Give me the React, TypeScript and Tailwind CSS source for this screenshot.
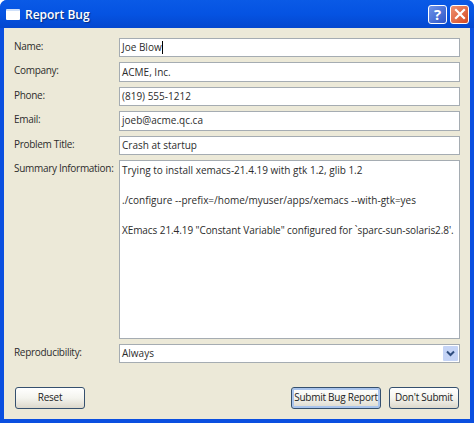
import React from "react";

const fields = [
  { label: "Name:", value: "Joe Blow", caret: true },
  { label: "Company:", value: "ACME, Inc." },
  { label: "Phone:", value: "(819) 555-1212" },
  { label: "Email:", value: "joeb@acme.qc.ca" },
  { label: "Problem Title:", value: "Crash at startup" },
];

function Row({ label, children }: { label: string; children: React.ReactNode }) {
  return (
    <div className="flex">
      <div className="w-[105px] shrink-0 pt-[1px] whitespace-nowrap tracking-[-0.3px] text-[#2c2c2c]">{label}</div>
      <div className="flex-1 min-w-0">{children}</div>
    </div>
  );
}

function Button({ label, focused, width }: { label: string; focused?: boolean; width: string }) {
  return (
    <button
      className={`${width} h-[22px] whitespace-nowrap tracking-[-0.25px] rounded-[3px] border border-[#35506e] bg-gradient-to-b from-white via-[#f4f4ee] to-[#dcd8cc] text-[#222] ${
        focused ? "shadow-[inset_0_0_0_2px_#a9c4ec]" : ""
      }`}
    >
      {label}
    </button>
  );
}

export default function App() {
  return (
    <div className="w-[474px] h-[423px] flex flex-col overflow-hidden rounded-t-[7px] bg-[#0a4fe0] font-['Open_Sans',sans-serif] text-[10px] leading-[15px]">
      {/* title bar */}
      <div className="h-[28px] shrink-0 flex items-center pl-[6px] pr-[5px] bg-gradient-to-b from-[#0a5ae6] via-[#0553e2] to-[#0447cf]">
        <div className="w-[14px] h-[11px] bg-white rounded-[1px] border-t-2 border-[#cfe0fa]" />
        <div className="ml-[5px] text-[12px] font-semibold text-white [text-shadow:1px_1px_1px_#0a2f80]">
          Report Bug
        </div>
        <div className="ml-auto flex gap-[3px] items-center">
          <div className="w-[19px] h-[19px] rounded-[3px] border border-white bg-gradient-to-br from-[#6f93e8] to-[#2f55c8] flex items-center justify-center text-white font-bold text-[15px]">
            ?
          </div>
          <div className="w-[19px] h-[19px] rounded-[3px] border border-white bg-gradient-to-br from-[#ee9170] to-[#d4481f] flex items-center justify-center">
            <svg width="12" height="12" viewBox="0 0 12 12">
              <path d="M2 2 L10 10 M10 2 L2 10" stroke="white" strokeWidth="2.2" strokeLinecap="square" />
            </svg>
          </div>
        </div>
      </div>

      {/* client area */}
      <div className="flex-1 mx-[4px] mb-[4px] bg-[#ece9d8] flex flex-col pl-[10px] pr-[10px] pt-[10px]">
        <div className="flex flex-col gap-[5px]">
          {fields.map((f) => (
            <Row key={f.label} label={f.label}>
              <div className="h-[19.4px] bg-white border border-[#a5acb2] pl-[2px] flex items-center text-[#2c2c2c]">
                {f.value}
                {f.caret && <span className="w-px h-[13px] bg-black" />}
              </div>
            </Row>
          ))}
          <Row label="Summary Information:">
            <div className="h-[179px] bg-white border border-[#a5acb2] pl-[2px] pt-[2px] text-[#2c2c2c] whitespace-pre">
              <div>Trying to install xemacs-21.4.19 with gtk 1.2, glib 1.2</div>
              <div className="mt-[15px]">./configure --prefix=/home/myuser/apps/xemacs --with-gtk=yes</div>
              <div className="mt-[15px] tracking-[-0.08px]">XEmacs 21.4.19 "Constant Variable" configured for `sparc-sun-solaris2.8'.</div>
            </div>
          </Row>
          <Row label="Reproducibility:">
            <div className="h-[19px] bg-white border border-[#a5acb2] pl-[2px] flex items-center justify-between text-[#2c2c2c]">
              Always
              <div className="w-[15px] h-[15px] mr-[1px] rounded-[1px] bg-[#c5d4f6] flex items-center justify-center">
                <svg width="9" height="7" viewBox="0 0 9 7">
                  <path d="M1 1.5 L4.5 5 L8 1.5" fill="none" stroke="#2f4d7e" strokeWidth="2" />
                </svg>
              </div>
            </div>
          </Row>
        </div>
        <div className="flex mt-[24px] pl-[1px] pr-[1px]">
          <Button label="Reset" width="w-[70px]" />
          <div className="ml-auto flex gap-[8px]">
            <Button label="Submit Bug Report" width="w-[90px]" focused />
            <Button label="Don't Submit" width="w-[70px]" />
          </div>
        </div>
      </div>
    </div>
  );
}
